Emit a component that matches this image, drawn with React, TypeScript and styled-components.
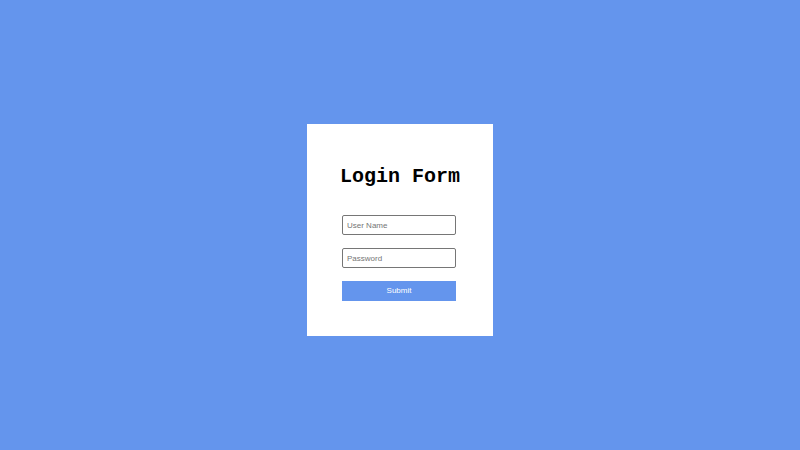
import React from "react";
import styled, { createGlobalStyle } from "styled-components";

const GlobalStyle = createGlobalStyle`
  * { box-sizing: border-box; }
  body { margin: 0; background: cornflowerblue; }
`;

const Page = styled.main`
  min-height: 100vh;
  display: flex;
  align-items: center;
  justify-content: center;
  padding-top: 10px;
`;

const Card = styled.form`
  display: flex;
  flex-direction: column;
  padding: 35px 33px;
  background: #fff;
`;

const Title = styled.h1`
  margin: 5px 0 25px;
  font: bold 20px/26px "Liberation Mono", monospace;
  color: #000;
  text-align: center;
`;

const Fields = styled.div`
  display: flex;
  flex-direction: column;
  gap: 13px;
  padding: 0 4px 0 2px;
`;

const Input = styled.input`
  width: 0;
  min-width: 100%;
  height: 20px;
  padding: 0 4px;
  border: 1px solid #767676;
  border-radius: 2px;
  background: #fff;
  font: 8px/16px "Liberation Sans", Arial, sans-serif;
  &::placeholder { color: #757575; }
`;

const Submit = styled.button`
  height: 20px;
  padding: 0;
  border: 0;
  background: cornflowerblue;
  color: #fff;
  font: 8px/16px "Liberation Sans", Arial, sans-serif;
  cursor: pointer;
`;

export default function App() {
  return (
    <>
      <GlobalStyle />
      <Page>
        <Card onSubmit={(e: React.FormEvent) => e.preventDefault()}>
          <Title>Login Form</Title>
          <Fields>
            <Input type="text" name="username" placeholder="User Name" aria-label="User Name" />
            <Input type="password" name="password" placeholder="Password" aria-label="Password" />
            <Submit type="submit">Submit</Submit>
          </Fields>
        </Card>
      </Page>
    </>
  );
}
